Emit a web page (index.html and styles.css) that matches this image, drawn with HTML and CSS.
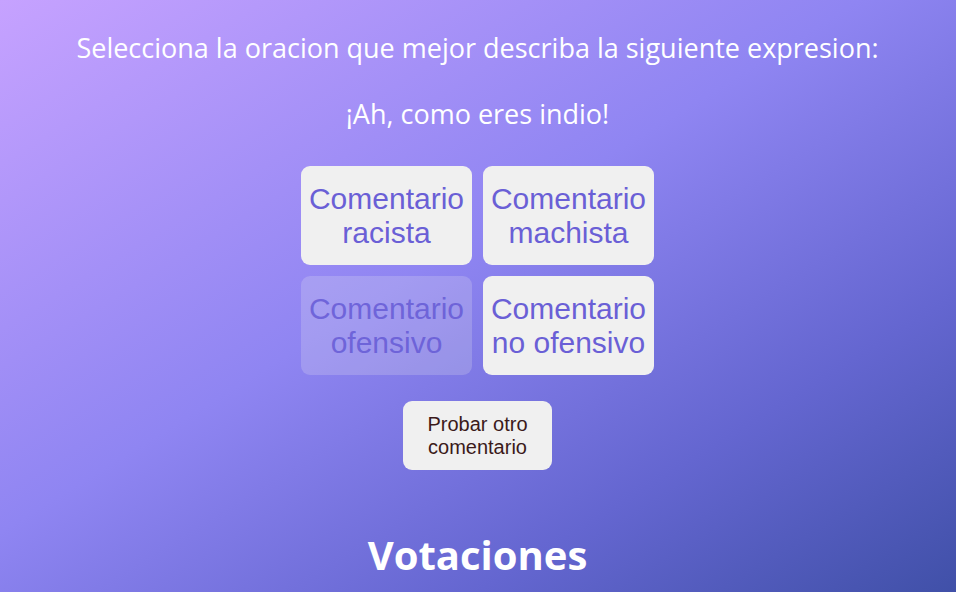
FILE: index.html
```html
<!DOCTYPE html>
<html lang="es">
<head>
<meta charset="utf-8">
<title>Votaciones</title>
<link rel="stylesheet" href="styles.css">
</head>
<body>
<main class="page">
  <p class="prompt">Selecciona la oracion que mejor describa la siguiente expresion:</p>
  <p class="phrase">¡Ah, como eres indio!</p>
  <div class="options">
    <button class="option">Comentario racista</button>
    <button class="option">Comentario machista</button>
    <button class="option option-disabled" disabled>Comentario ofensivo</button>
    <button class="option">Comentario no ofensivo</button>
  </div>
  <button class="retry">Probar otro<br>comentario</button>
  <h1 class="votes">Votaciones</h1>
</main>
</body>
</html>
```
FILE: styles.css
```css
html, body {
  margin: 0;
  height: 100%;
}
body {
  background: linear-gradient(to bottom right, #c6a2ff 0%, #8f85f2 45%, #6466d0 75%, #4050a8 100%);
  font-family: "Open Sans", "Noto Sans", sans-serif;
  color: #ffffff;
  overflow: hidden;
}
.page {
  display: flex;
  flex-direction: column;
  align-items: center;
  padding-top: 29px;
  padding-right: 1px;
}
.prompt {
  margin: 0;
  font-size: 27px;
  line-height: 38px;
}
.phrase {
  margin: 28px 0 0;
  font-size: 27px;
  line-height: 38px;
}
.options {
  margin-top: 33px;
  display: grid;
  grid-template-columns: 171px 171px;
  column-gap: 11px;
  row-gap: 11px;
}
.option {
  font-family: "Liberation Sans", Arial, sans-serif;
  font-size: 30px;
  line-height: 34px;
  color: #6a5fd6;
  background: #f0f0f0;
  border: none;
  border-radius: 9px;
  height: 99px;
  padding: 0 6px;
}
.option-disabled {
  background: rgba(240, 240, 240, 0.25);
  color: #6a5fd6;
  opacity: 0.85;
}
.retry {
  margin-top: 26px;
  font-family: "Liberation Sans", Arial, sans-serif;
  font-size: 20px;
  line-height: 23px;
  color: #3b1a1a;
  background: #f0f0f0;
  border: none;
  border-radius: 9px;
  width: 149px;
  height: 69px;
  padding: 0;
}
.votes {
  margin: 59px 0 0;
  font-size: 40px;
  font-weight: 700;
  line-height: 52px;
}
```
